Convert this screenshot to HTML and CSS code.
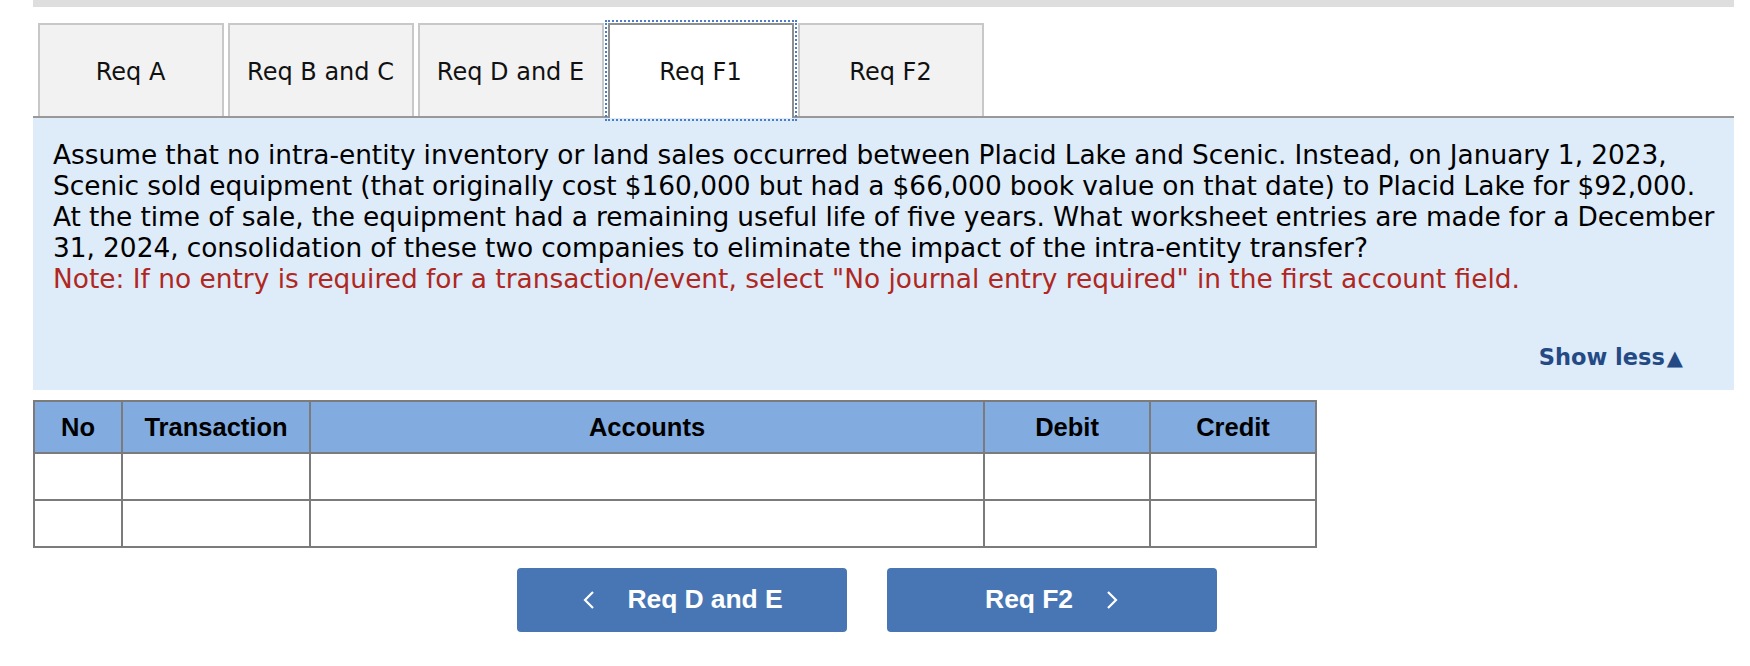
FILE: index.html
```html
<!DOCTYPE html>
<html lang="en">
<head>
<meta charset="utf-8">
<title>Req F1</title>
<link rel="stylesheet" href="styles.css">
</head>
<body>
<div class="page">
  <div class="topbar"></div>
  <ul class="tabs">
    <li class="tab">Req A</li>
    <li class="tab">Req B and C</li>
    <li class="tab">Req D and E</li>
    <li class="tab active">Req F1</li>
    <li class="tab">Req F2</li>
  </ul>
  <div class="panel">
    <p class="question">Assume that no intra-entity inventory or land sales occurred between Placid Lake and Scenic. Instead, on January 1, 2023,<br>Scenic sold equipment (that originally cost $160,000 but had a $66,000 book value on that date) to Placid Lake for $92,000.<br>At the time of sale, the equipment had a remaining useful life of five years. What worksheet entries are made for a December<br>31, 2024, consolidation of these two companies to eliminate the impact of the intra-entity transfer?</p>
    <p class="note">Note: If no entry is required for a transaction/event, select "No journal entry required" in the first account field.</p>
    <div class="toggle-row"><span class="toggle">Show less<span class="tri">&#9650;</span></span></div>
  </div>
  <table class="journal">
    <colgroup>
      <col class="c-no">
      <col class="c-tr">
      <col class="c-acc">
      <col class="c-amt">
      <col class="c-amt">
    </colgroup>
    <thead>
      <tr><th>No</th><th>Transaction</th><th>Accounts</th><th>Debit</th><th>Credit</th></tr>
    </thead>
    <tbody>
      <tr><td></td><td></td><td></td><td></td><td></td></tr>
      <tr><td></td><td></td><td></td><td></td><td></td></tr>
    </tbody>
  </table>
  <div class="nav">
    <a class="btn"><svg class="chev" width="14" height="18" viewBox="0 0 14 18"><polyline points="11,1 3,9 11,17" fill="none" stroke="#fff" stroke-width="2.2"/></svg><span>Req D and E</span></a>
    <a class="btn"><span>Req F2</span><svg class="chev" width="14" height="18" viewBox="0 0 14 18"><polyline points="3,1 11,9 3,17" fill="none" stroke="#fff" stroke-width="2.2"/></svg></a>
  </div>
</div>
</body>
</html>
```
FILE: styles.css
```css
body {
  margin: 0;
  background: #fff;
  font-family: "DejaVu Sans", Verdana, sans-serif;
  color: #000;
}

.page {
  width: 1701px;
  padding-left: 33px;
}

.topbar {
  height: 7px;
  background: #dedede;
}

.tabs {
  list-style: none;
  margin: 15.5px 0 0;
  padding: 0 0 0 4.5px;
  display: flex;
  gap: 4px;
  border-bottom: 2px solid #999;
}

.tab {
  box-sizing: border-box;
  width: 186px;
  height: 93.5px;
  border: 2px solid #c8c8c8;
  border-bottom: none;
  background: #f2f2f2;
  display: flex;
  align-items: center;
  justify-content: center;
  padding-top: 4px;
  font-size: 24px;
  color: #111;
}

.tab.active {
  background: #fff;
  border-color: #8f8f8f;
  outline: 2px dotted #4a7cc7;
  outline-offset: 1px;
  height: 95.5px;
  margin-bottom: -2px;
  padding-bottom: 2px;
}

.panel {
  background: #deebf8;
  padding: 21px 51px 20px 20px;
}

.question,
.note {
  margin: 0;
  font-size: 26.4px;
  line-height: 31px;
  white-space: nowrap;
}

.question {
  word-spacing: -0.3px;
}

.note {
  color: #b0271f;
}

.toggle-row {
  display: flex;
  justify-content: flex-end;
  margin-top: 51px;
}

.toggle {
  font-weight: bold;
  font-size: 22.5px;
  line-height: 24px;
  color: #234a85;
}

.tri {
  font-size: 21px;
  margin-left: 2px;
}

.journal {
  margin-top: 10px;
  border-collapse: collapse;
  table-layout: fixed;
  width: 1284px;
  font-family: "Liberation Sans", Arial, sans-serif;
}

.c-no { width: 88px; }
.c-tr { width: 188px; }
.c-acc { width: 674px; }
.c-amt { width: 166px; }

.journal th,
.journal td {
  border: 2px solid #7b7b7b;
  padding: 0;
}

.journal th {
  background: #82abdf;
  height: 50px;
  font-size: 25.5px;
  font-weight: bold;
  text-align: center;
}

.journal td {
  height: 45px;
  background: #fff;
}

.nav {
  display: flex;
  justify-content: center;
  gap: 40px;
  padding-right: 33px;
  margin-top: 20px;
}

.btn {
  box-sizing: border-box;
  width: 330px;
  height: 63.5px;
  background: #4876b4;
  border-radius: 4px;
  color: #fff;
  display: flex;
  align-items: center;
  justify-content: center;
  gap: 32px;
  font-family: "Liberation Sans", Arial, sans-serif;
  font-weight: bold;
  font-size: 26.5px;
  letter-spacing: -0.1px;
}

.chev {
  display: block;
}
```
